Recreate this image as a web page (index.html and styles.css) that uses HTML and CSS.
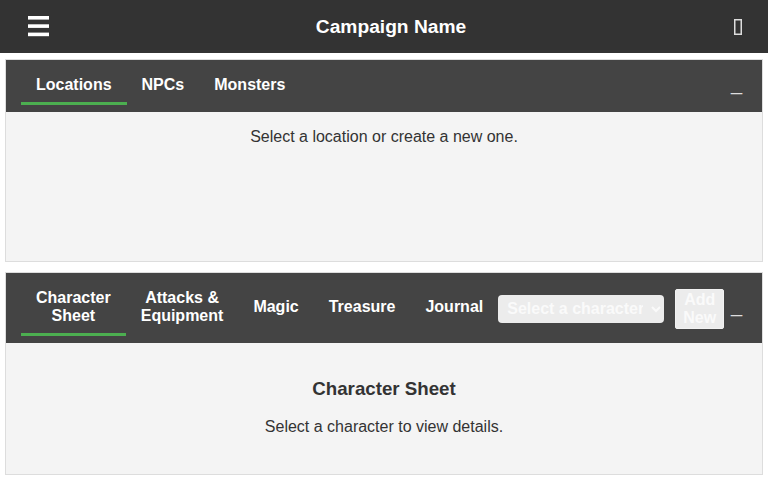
FILE: index.html
```html
<!DOCTYPE html>
<html lang="en">
<head>
  <meta charset="UTF-8">
  <title>Campaign Name</title>
  <link rel="stylesheet" href="styles.css">
</head>
<body>
  <div class="top-bar">
    <button class="menu-btn" aria-label="Menu">
      <svg width="21" height="21" viewBox="0 0 21 21">
        <rect x="0" y="0" width="21" height="3.6" fill="#fff"/>
        <rect x="0" y="8.3" width="21" height="3.6" fill="#fff"/>
        <rect x="0" y="16.6" width="21" height="3.6" fill="#fff"/>
      </svg>
    </button>
    <div class="title">Campaign Name</div>
    <button class="user-btn" aria-label="Account">
      <svg width="8" height="16" viewBox="0 0 8 16">
        <rect x="0.75" y="0.75" width="6.5" height="14.5" fill="none" stroke="#ddd" stroke-width="1.5"/>
      </svg>
    </button>
  </div>

  <div class="main">
    <div class="panel">
      <div class="panel-header">
        <div class="tab active">Locations</div>
        <div class="tab">NPCs</div>
        <div class="tab">Monsters</div>
        <button class="min-btn">_</button>
      </div>
      <div class="panel-body">
        <p>Select a location or create a new one.</p>
      </div>
    </div>

    <div class="panel">
      <div class="panel-header">
        <div class="tab active">Character<br>Sheet</div>
        <div class="tab">Attacks &amp;<br>Equipment</div>
        <div class="tab">Magic</div>
        <div class="tab">Treasure</div>
        <div class="tab">Journal</div>
        <select class="char-select">
          <option>Select a character</option>
        </select>
        <button class="add-btn">Add<br>New</button>
        <button class="min-btn">_</button>
      </div>
      <div class="panel-body">
        <h3>Character Sheet</h3>
        <p>Select a character to view details.</p>
      </div>
    </div>
  </div>
</body>
</html>
```

FILE: styles.css
```css
body {
  margin: 0;
  padding: 0;
  font-family: "Liberation Sans", Arial, sans-serif;
  background-color: #fff;
  color: #333;
  height: 480px;
  display: flex;
  flex-direction: column;
}

.top-bar {
  height: 53px;
  background-color: #333;
  display: flex;
  align-items: center;
  justify-content: space-between;
  padding: 0 20px;
  flex-shrink: 0;
}

.menu-btn {
  background: none;
  border: none;
  padding: 0 5px 0 8px;
  width: 34px;
  height: 21px;
  display: flex;
  align-items: center;
}

.user-btn {
  background: none;
  border: none;
  padding: 0 6px;
  width: 20px;
  height: 16px;
  display: flex;
  align-items: center;
}

.title {
  color: #fff;
  font-weight: bold;
  font-size: 19.2px;
}

.main {
  flex: 1;
  display: flex;
  flex-direction: column;
  gap: 10px;
  padding: 6px 5px 5px;
  min-height: 0;
}

.panel {
  flex: 1;
  display: flex;
  flex-direction: column;
  border: 1px solid #ddd;
  background-color: #f4f4f4;
  min-height: 0;
}

.panel-header {
  background-color: #444;
  display: flex;
  align-items: center;
  padding: 8px 15px 7px;
}

.tab {
  color: #fff;
  font-weight: bold;
  font-size: 16px;
  line-height: 18px;
  text-align: center;
  padding: 8px 15px;
  border-bottom: 3px solid transparent;
  white-space: nowrap;
  flex-shrink: 0;
}

.tab.active {
  border-bottom-color: #4caf50;
}

.char-select {
  width: 166px;
  height: 28px;
  background-color: #ececec;
  color: #fafafa;
  border: none;
  border-radius: 4px;
  font-family: "Liberation Sans", Arial, sans-serif;
  font-weight: bold;
  font-size: 16px;
  padding: 0 5px;
  flex-shrink: 0;
}

.add-btn {
  margin-left: 11px;
  background-color: #ececec;
  color: #fafafa;
  border: 1px solid #f2f2f2;
  border-radius: 2px;
  font-family: "Liberation Sans", Arial, sans-serif;
  font-weight: bold;
  font-size: 16px;
  line-height: 18px;
  padding: 1px 7px;
  flex-shrink: 0;
}

.min-btn {
  margin-left: auto;
  background: none;
  border: none;
  color: #ddd;
  font-family: "Liberation Sans", Arial, sans-serif;
  font-size: 20px;
  line-height: 23px;
  padding: 0 5px 7px;
  flex-shrink: 0;
}

.panel-body {
  flex: 1;
  padding: 16px 15px 14px;
  text-align: center;
}

.panel-body p {
  margin: 0;
  font-size: 16px;
}

.panel-body h3 {
  font-size: 18.72px;
  margin: 18.72px 0;
}
```
